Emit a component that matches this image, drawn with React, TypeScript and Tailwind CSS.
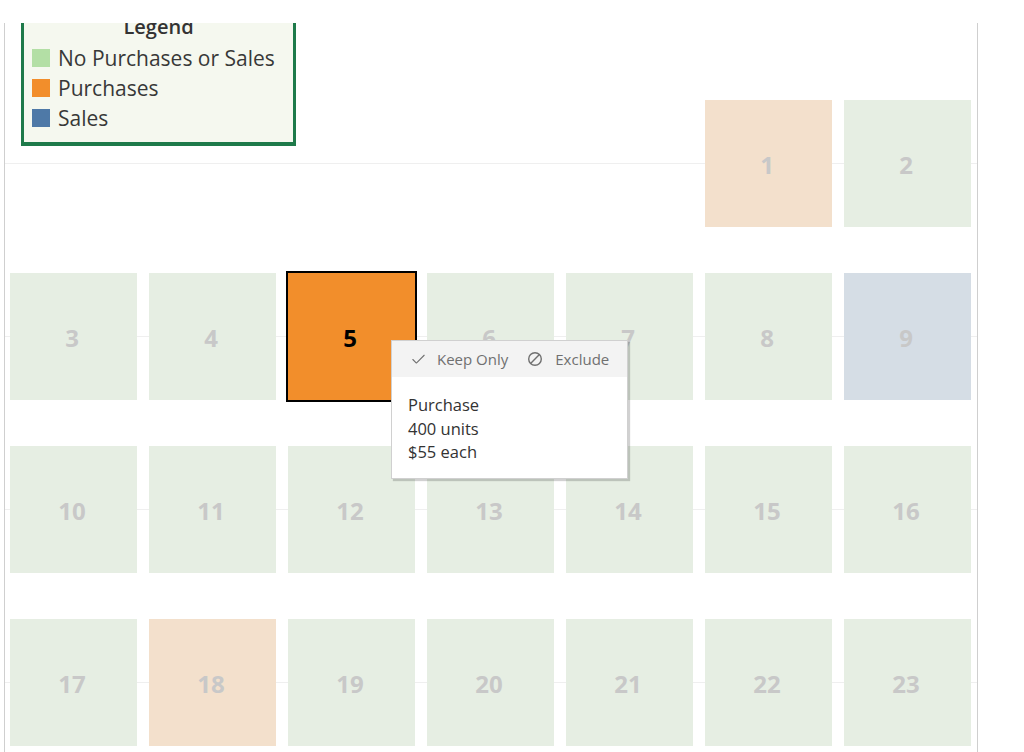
import { Check } from 'lucide-react';

type Kind = 'none' | 'empty' | 'buy' | 'sell' | 'picked';

interface DayCell {
  day?: number;
  kind: Kind;
}

const weeks: DayCell[][] = [
  [
    { kind: 'empty' }, { kind: 'empty' }, { kind: 'empty' }, { kind: 'empty' }, { kind: 'empty' },
    { day: 1, kind: 'buy' }, { day: 2, kind: 'none' },
  ],
  [
    { day: 3, kind: 'none' }, { day: 4, kind: 'none' }, { day: 5, kind: 'picked' }, { day: 6, kind: 'none' },
    { day: 7, kind: 'none' }, { day: 8, kind: 'none' }, { day: 9, kind: 'sell' },
  ],
  [10, 11, 12, 13, 14, 15, 16].map(d => ({ day: d, kind: 'none' as Kind })),
  [17, 18, 19, 20, 21, 22, 23].map(d => ({ day: d, kind: (d === 18 ? 'buy' : 'none') as Kind })),
];

const cellStyles: Record<Kind, string> = {
  none: 'bg-[#e6eee3] text-[#c8c8c8]',
  buy: 'bg-[#f3e0cc] text-[#c8c8c8]',
  sell: 'bg-[#d5dde5] text-[#c8c8c8]',
  picked: 'bg-[#f28e2b] text-black ring-2 ring-black',
  empty: 'bg-transparent',
};

const legendItems = [
  { label: 'No Purchases or Sales', color: 'bg-[#b3dfa5]' },
  { label: 'Purchases', color: 'bg-[#f28e2b]' },
  { label: 'Sales', color: 'bg-[#4e79a7]' },
];

// circle with a slash, bottom-left to top-right
const ExcludeIcon = () => (
  <svg width="16" height="16" viewBox="0 0 16 16" fill="none" stroke="currentColor" strokeWidth="1.4">
    <circle cx="8" cy="8" r="6.3" />
    <path d="M3.6 12.4 12.4 3.6" />
  </svg>
);

const Legend = () => (
  <div className="absolute left-[16px] top-[-15px] w-[275px] h-[138px] bg-[#f5f8ef] border-l-[3px] border-r-[3px] border-b-[4px] border-[#1e7a4a] z-10">
    <div className="h-[35px] pt-[9px] text-center text-[20px] leading-[20px] font-semibold text-[#333]">Legend</div>
    {legendItems.map(item => (
      <div key={item.label} className="h-[30px] flex items-center gap-[8px] pl-[8px]">
        <div className={`w-[18px] h-[18px] ${item.color}`} />
        <span className="text-[21px] leading-[24px] text-[#383838]">{item.label}</span>
      </div>
    ))}
  </div>
);

const Tooltip = () => (
  <div className="absolute left-[386px] top-[317px] w-[237px] bg-white border border-[#d0d0d0] shadow-[2px_2px_1px_rgba(0,0,0,0.18)] z-20">
    <div className="h-[36px] bg-[#f3f3f3] flex items-center pl-[18px] text-[15px] text-[#707070]">
      <Check className="w-[17px] h-[17px]" strokeWidth={1.5} />
      <span className="ml-[10px]">Keep Only</span>
      <span className="ml-[19px]"><ExcludeIcon /></span>
      <span className="ml-[12px]">Exclude</span>
    </div>
    <div className="pl-[16px] pt-[16px] pb-[14px] text-[16.5px] leading-[23.5px] text-[#333]">
      <div>Purchase</div>
      <div>400 units</div>
      <div>$55 each</div>
    </div>
  </div>
);

export default function App() {
  return (
    <div className="w-[1024px] h-[752px] bg-white overflow-hidden pt-[23px] font-['Open_Sans',_sans-serif]">
      <div className="relative ml-[4px] w-[974px] h-[729px] border-l border-r border-[#cfcfcf] overflow-hidden">
        <Legend />
        <div className="pt-[54px]">
          {weeks.map((week, wi) => (
            <div key={wi} className="relative h-[173px] flex items-center gap-[12px] pl-[5px]">
              <div className="absolute left-0 right-0 top-[86px] h-px bg-[#efefef]" />
              {week.map((cell, ci) => (
                <div
                  key={ci}
                  className={`relative w-[127px] h-[127px] flex items-center justify-center pt-[3px] pr-[3px] text-[24px] font-bold ${cellStyles[cell.kind]}`}
                >
                  {cell.day}
                </div>
              ))}
            </div>
          ))}
        </div>
        <Tooltip />
      </div>
    </div>
  );
}
